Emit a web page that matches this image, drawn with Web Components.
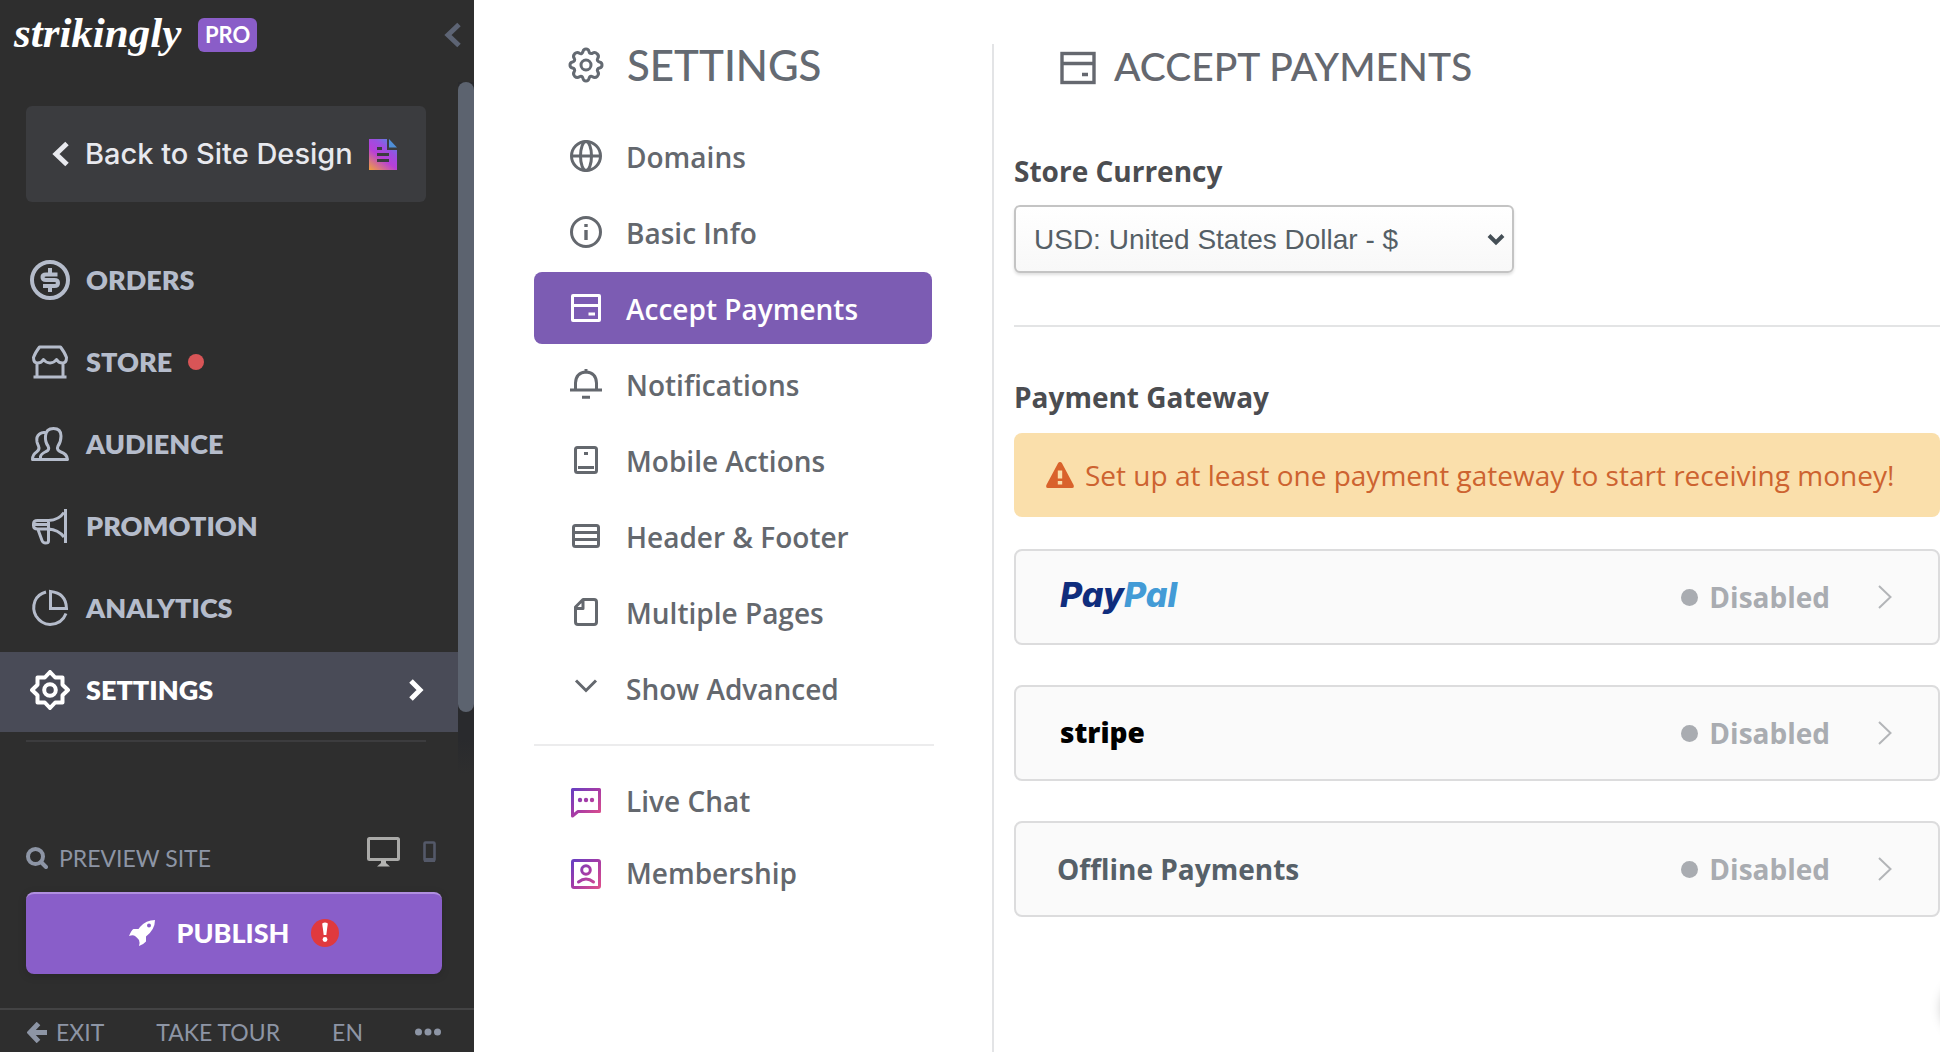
<!DOCTYPE html>
<html lang="en">
<head>
<meta charset="utf-8">
<title>Strikingly – Accept Payments</title>
<style>
  html, body { margin: 0; height: 100%; background: #fff; }
  body { font-family: "Open Sans", sans-serif; overflow: hidden; }
</style>
</head>
<body>
<site-editor></site-editor>

<script>
const define = (name, css, html, setup) => {
  customElements.define(name, class extends HTMLElement {
    connectedCallback() {
      if (this.shadowRoot) return;
      const root = this.attachShadow({ mode: 'open' });
      const t = document.createElement('template');
      t.innerHTML = `<style>*{box-sizing:border-box}${css}</style>` + (typeof html === 'function' ? html(this) : html);
      root.append(t.content.cloneNode(true));
      if (setup) setup(this, root);
    }
  });
};

const stroke = (w, body) => `<g fill="none" stroke="currentColor" stroke-width="${w}">${body}</g>`;
const grad = (id) => `<defs><linearGradient id="${id}" x1="0" y1="0" x2="32" y2="32" gradientUnits="userSpaceOnUse"><stop offset=".1" stop-color="#6b3fc0"/><stop offset=".5" stop-color="#a63ba6"/><stop offset=".95" stop-color="#e0508a"/></linearGradient></defs>`;

const ICONS = {
  'chevron-left': [17, 26, stroke(5, '<path d="M15 2.500 4 13 15 23.500"/>')],
  'chevron-right': [15, 22, stroke(5, '<path d="M2 2 11 11 2 20"/>')],
  'thin-right': [14, 24, stroke(2, '<path d="M1 1 12.500 12 1 23"/>')],
  'select-arrow': [18, 13, stroke(4, '<path d="M2 2.500 9 9.500 16 2.500"/>')],
  'site-doc': [28, 31, `<defs><linearGradient id="d" x1="0" y1="31" x2="24" y2="0" gradientUnits="userSpaceOnUse"><stop offset="0" stop-color="#f2a13c"/><stop offset=".45" stop-color="#b83fd8"/><stop offset=".7" stop-color="#9b4fe0"/><stop offset="1" stop-color="#4f8fe0"/></linearGradient></defs><path fill="url(#d)" d="M0 0H18V11H28V31H0Z"/><path fill="#4f8fd8" d="M20 0 28 8.500H20Z"/><path stroke="#3b3c3f" stroke-width="3" d="M8 9.500H13M8 15.500H20M8 21.500H20"/>`],
  orders: [40, 40, stroke(4, '<circle cx="20" cy="20" r="18"/><path d="M27.500 14.500H16Q12.500 14.500 12.500 17Q12.500 20 16 20H24.500Q28 20 28 23Q28 26 24.500 26H13M20 8V14M20 26V32"/>')],
  store: [40, 40, stroke(3, '<path stroke-linejoin="round" d="M9.500 5H30.500Q35 11 36.500 15.500Q36.500 21 32.500 21Q28.500 21 26.500 17.500Q24 21 20 21Q16 21 13.500 17.500Q11.500 21 7.500 21Q3.500 21 3.500 15.500Q5 11 9.500 5ZM7 21V34M33 21V34M3.500 35H36.500"/>')],
  audience: [40, 40, stroke(3, '<path stroke-linejoin="round" d="M10.500 35.500V32.500Q11 30 16 27.500Q20 26 18 22Q15 18 15.500 12Q16 4.500 23.500 4.500Q31 4.500 31 12Q31 18 28 22Q26 26 31 28Q37 30 37.500 35.500ZM15 8.500Q12 8 9.500 10Q6 12.500 7 18Q7.500 20 8.500 22Q10 25.500 6.500 28Q2.500 30.500 2.500 35.500H10.500M10 28.500"/>')],
  promotion: [40, 40, stroke(3, '<path stroke-linejoin="round" d="M35.500 3V37M34 6.500Q29 14 18.500 14.500H7.500Q3.500 14.500 3.500 18V19.500Q3.500 23 7.500 23H18.500Q28 23.500 34 31M18.500 14.500V35Q18.500 37 15.500 37Q13 37 12 34.500L8 23.500M5 18.500H18"/>')],
  analytics: [40, 40, stroke(3, '<path d="M16 4Q8 6 5 13Q2 21 6 28Q11 36 20 36.500Q32 36 36 25.500M20.500 3.500V20.500H36.500Q36 5 20.500 3.500Z"/>')],
  settings: [40, 40, stroke(4, '<path stroke-linejoin="round" d="M20 2 25.200 7.500H32.500V14.800L38 20 32.500 25.200V32.500H25.200L20 38 14.800 32.500H7.500V25.200L2 20 7.500 14.800V7.500H14.800Z"/><circle cx="20" cy="20" r="5.800"/>')],
  search: [22, 22, stroke(4, '<circle cx="9.500" cy="9.500" r="7.500"/><path stroke-linecap="round" d="M15 15 20 20"/>')],
  monitor: [33, 30, `<rect x="1.500" y="1.500" width="30" height="21" rx="1" fill="none" stroke="#aaaaa8" stroke-width="3"/><path fill="#b4b4b2" d="M14 23H19V26L23 29.500H10L14 26Z"/>`],
  phone: [13, 22, `<rect x="1.500" y="1.500" width="10" height="18" rx="1" fill="none" stroke="#545969" stroke-width="2.600"/><path fill="#545969" d="M1 17H12V21H1Z"/>`],
  rocket: [26, 26, `<path fill="currentColor" fill-rule="evenodd" d="M26 0Q17 0 11 7L9.500 9H4.500Q2.500 10 0 16Q4 14.500 6 16Q8 17.500 10 20Q11 22 10 26Q15 24 17 21.500V16.500Q26 9.500 26 0ZM20 3.500A2 2 0 1 0 20 7.500A2 2 0 1 0 20 3.500Z"/>`],
  alert: [28, 28, `<circle cx="14" cy="14" r="14" fill="#e0393e"/><path fill="#fff" d="M11.200 4.500Q14 2.500 16.800 4.500L15.300 16H12.700Z"/><circle cx="14" cy="20.500" r="2.400" fill="#fff"/>`],
  back: [21, 21, stroke(5, '<path stroke-linejoin="round" d="M3 10.500H20"/><path d="M11.500 1.500 3 10.500 11.500 19.500"/>')],
  dots: [26, 8, `<g fill="currentColor"><circle cx="3.500" cy="4" r="3.500"/><circle cx="13" cy="4" r="3.500"/><circle cx="22.500" cy="4" r="3.500"/></g>`],
  gear: [36, 36, stroke(3, '<path stroke-linejoin="round" d="M18 2Q20.500 2 21 4.500Q21.500 7 24 6.500Q27 4.500 29 6.700Q31.500 9 29.700 11.500Q28.300 14 31.500 15Q34 15.500 34 18Q34 20.500 31.500 21Q28.300 22 29.700 24.500Q31.500 27 29.300 29.300Q27 31.500 24.500 29.700Q22 28.300 21 31.500Q20.500 34 18 34Q15.500 34 15 31.500Q14 28.300 11.500 29.700Q9 31.500 6.700 29.300Q4.500 27 6.300 24.500Q7.700 22 4.500 21Q2 20.500 2 18Q2 15.500 4.500 15Q7.700 14 6.300 11.500Q4.500 9 6.700 6.700Q9 4.500 11.500 6.300Q14 7.700 15 4.500Q15.500 2 18 2Z"/><circle cx="18" cy="18" r="5"/>')],
  globe: [32, 32, stroke(3, '<circle cx="16" cy="16" r="14.500"/><ellipse cx="16" cy="16" rx="5.500" ry="14.500"/><path d="M1.500 16H30.500"/>')],
  info: [32, 32, stroke(3, '<circle cx="16" cy="16" r="14.500"/><path d="M16 14V24M16 8V11" stroke-width="3.400"/>')],
  card: [32, 32, stroke(3, '<rect x="2.500" y="3.500" width="27" height="25" rx=".5"/><path d="M2 13.500H30M18.500 22H25"/>')],
  'card-large': [36, 34, stroke(3.4, '<rect x="2" y="2.500" width="32" height="29"/><path d="M1.500 12.500H34.500M22 23.500H28"/>')],
  bell: [32, 32, stroke(3, '<path d="M0 22H32M5.500 22V15Q6 4.500 16 4Q26 4.500 26.500 15V22M16 1V4M12 29.300H20"/>')],
  mobile: [32, 32, stroke(3, '<rect x="5.500" y="3.500" width="21" height="25" rx="2"/><path d="M8 23.500H24M14 9.500H18"/>')],
  layout: [32, 32, stroke(3, '<rect x="3.500" y="5.500" width="25" height="21" rx="2"/><path d="M4 12.500H28M4 19.500H28"/>')],
  page: [32, 32, stroke(3, '<path stroke-linejoin="round" d="M13 3.500H24Q26.500 3.500 26.500 6V26Q26.500 28.500 24 28.500H8Q5.500 28.500 5.500 26V11ZM13 4V12.500H6"/>')],
  down: [32, 32, stroke(3, '<path d="M6 8.500 16 18.500 26 8.500"/>')],
  chat: [32, 32, grad('c') + `<path fill="none" stroke="url(#c)" stroke-width="3" stroke-linejoin="round" d="M2.500 3.500H29.500V25.500H8L2.500 30Z"/><g fill="url(#c)"><circle cx="10" cy="14" r="2.200"/><circle cx="16" cy="14" r="2.200"/><circle cx="22" cy="14" r="2.200"/></g>`],
  member: [32, 32, grad('m') + `<g fill="none" stroke="url(#m)" stroke-width="3"><rect x="2.500" y="2.500" width="27" height="27" rx="1.500"/><circle cx="16" cy="12" r="4.300"/><path stroke-linecap="round" d="M8.500 24Q16 18 23.500 24"/></g>`],
  warning: [28, 26, `<path fill="currentColor" fill-rule="evenodd" d="M14 0Q15.300 0 16 1.200L27.600 23Q28.500 26 26 26H2Q-.5 26 .4 23L12 1.200Q12.700 0 14 0ZM11.800 8.500V16.500H16.200V8.500ZM11.800 19V22.500H16.200V19Z"/>`]
};

define('ui-icon', ':host{display:inline-flex;flex:none}svg{display:block}', el => {
  const [w, h, body] = ICONS[el.getAttribute('name')];
  return `<svg width="${w}" height="${h}" viewBox="0 0 ${w} ${h}" aria-hidden="true">${body}</svg>`;
});

define('brand-bar', `
  :host{display:flex;align-items:flex-start;height:82px;padding:0 13px 0 14px}
  .logo{font:italic 700 43px/66px "Liberation Serif",serif;color:#fff;text-decoration:none;width:184px}
  .pro{margin-top:18px;padding:0 7px;height:34px;border-radius:6px;background:#8a5dc8;color:#fff;font:700 22px/34px Lato,sans-serif}
  button{all:unset;margin:22px 0 0 auto;color:#5d6474;cursor:pointer}
`, `<a class="logo" href="#">strikingly</a><span class="pro">PRO</span><button aria-label="Collapse sidebar"><ui-icon name="chevron-left"></ui-icon></button>`);

define('back-button', `
  :host{display:block;margin:24px 32px 40px 26px}
  button{all:unset;box-sizing:border-box;display:flex;align-items:center;width:100%;height:96px;padding-left:26px;border-radius:6px;background:#3b3c3f;color:#e8e9ee;font:500 29px/36px Inter,sans-serif;white-space:nowrap;cursor:pointer}
  .label{margin:0 16px}
`, `<button><ui-icon name="chevron-left"></ui-icon><span class="label"><slot></slot></span><ui-icon name="site-doc"></ui-icon></button>`);

define('nav-item', `
  :host{display:block}
  a{display:flex;align-items:center;height:80px;padding:0 34px 4px 30px;color:#b5bccb;text-decoration:none;font:800 27px/36px Lato,sans-serif}
  .label{margin-left:16px}
  .dot{width:16px;height:16px;margin-left:16px;border-radius:50%;background:#d85557}
  .arrow{margin-left:auto}
  :host([active]) a{background:#494b57;color:#fff}
`, el => `<a href="#"><ui-icon name="${el.getAttribute('icon')}"></ui-icon><span class="label"><slot></slot></span>${el.hasAttribute('dot') ? '<span class="dot"></span>' : ''}${el.hasAttribute('active') ? '<ui-icon class="arrow" name="chevron-right"></ui-icon>' : ''}</a>`);

define('publish-panel', `
  :host{display:block;font:400 23px/32px Lato,sans-serif;color:#8d95a5}
  .preview{display:flex;align-items:center;margin:0 38px 14px 26px;height:40px}
  .preview a{display:flex;align-items:center;gap:11px;color:inherit;text-decoration:none}
  .devices{display:flex;align-items:center;gap:23px;margin:0 0 12px auto}
  .devices button{all:unset;display:flex}
  .publish{all:unset;box-sizing:border-box;display:flex;align-items:center;justify-content:center;gap:21px;width:calc(100% - 58px);height:82px;margin:0 32px 34px 26px;padding-bottom:2px;border-top:2px solid #b08fe0;border-radius:8px;background:#895ec9;color:#fff;font:900 27px/36px Lato,sans-serif;cursor:pointer;box-shadow:0 2px 8px rgba(0,0,0,.15)}
  footer{display:flex;align-items:center;justify-content:space-between;height:44px;padding:2px 33px 0 27px;border-top:2px solid #434344}
  footer a,footer button{all:unset;display:flex;align-items:center;gap:8px;cursor:pointer}
`, `
  <div class="preview"><a href="#"><ui-icon name="search"></ui-icon>PREVIEW SITE</a>
    <div class="devices"><button aria-label="Desktop preview"><ui-icon name="monitor"></ui-icon></button><button aria-label="Mobile preview"><ui-icon name="phone"></ui-icon></button></div></div>
  <button class="publish"><ui-icon name="rocket"></ui-icon>PUBLISH<ui-icon name="alert"></ui-icon></button>
  <footer><a href="#"><ui-icon name="back"></ui-icon>EXIT</a><a href="#">TAKE TOUR</a><button>EN</button><button aria-label="More"><ui-icon name="dots"></ui-icon></button></footer>
`);

define('editor-sidebar', `
  :host{display:flex;flex-direction:column;width:474px;flex:none;height:100%;background:#2e2e2e}
  .scroller{display:flex;flex:1;min-height:0;overflow:hidden}
  .items{flex:1}
  nav{display:flex;flex-direction:column;gap:2px}
  hr{margin:8px 32px 0 26px;border:0;height:2px;background:#3c3c3e}
  .track{width:16px;background:linear-gradient(#292a2d 95%,#2e2e2e)}
  .thumb{height:91%;border-radius:8px;background:#5c636f}
  publish-panel{margin-top:64px}
`, `
  <brand-bar></brand-bar>
  <div class="scroller"><div class="items">
    <back-button>Back to Site Design</back-button>
    <nav>
      <nav-item icon="orders">ORDERS</nav-item>
      <nav-item icon="store" dot>STORE</nav-item>
      <nav-item icon="audience">AUDIENCE</nav-item>
      <nav-item icon="promotion">PROMOTION</nav-item>
      <nav-item icon="analytics">ANALYTICS</nav-item>
      <nav-item icon="settings" active>SETTINGS</nav-item>
    </nav><hr></div>
    <div class="track"><div class="thumb"></div></div>
  </div>
  <publish-panel></publish-panel>
`);

define('settings-item', `
  :host{display:block}
  a{display:flex;align-items:center;gap:24px;height:72px;padding:0 36px;border-radius:8px;color:#64686e;text-decoration:none;font:600 28px/40px "Open Sans",sans-serif;white-space:nowrap}
  .label{padding-top:2px}
  :host([tight]) .label{padding:0 0 2px}
  :host([active]) a{background:#7c5cb3;color:#fff}
`, el => `<a href="#"><ui-icon name="${el.getAttribute('icon')}"></ui-icon><span class="label"><slot></slot></span></a>`);

define('settings-menu', `
  :host{display:block;width:518px;flex:none;padding:36px 58px 0 60px}
  h1{display:flex;align-items:center;gap:23px;margin:0 0 26px;padding-left:34px;color:#646a72;font:500 42px/58px Lato,sans-serif}
  nav{display:flex;flex-direction:column;gap:4px;padding-right:2px}
  .extra{gap:0}
  hr{margin:20px 0;border:0;height:2px;background:#ececed}
`, `
  <h1><ui-icon name="gear"></ui-icon>SETTINGS</h1>
  <nav>
    <settings-item icon="globe">Domains</settings-item>
    <settings-item icon="info">Basic Info</settings-item>
    <settings-item icon="card" active>Accept Payments</settings-item>
    <settings-item icon="bell">Notifications</settings-item>
    <settings-item icon="mobile">Mobile Actions</settings-item>
    <settings-item icon="layout">Header &amp; Footer</settings-item>
    <settings-item icon="page">Multiple Pages</settings-item>
    <settings-item icon="down">Show Advanced</settings-item>
  </nav><hr>
  <nav class="extra">
    <settings-item icon="chat" tight>Live Chat</settings-item>
    <settings-item icon="member" tight>Membership</settings-item>
  </nav>
`);

define('currency-field', `
  :host{display:block}
  label{display:block;margin-bottom:14px;color:#4b4d51;font:700 28px/40px "Open Sans",sans-serif}
  .field{display:grid;width:500px;max-width:100%;align-items:center}
  .field>*{grid-area:1/1}
  select{appearance:none;width:100%;height:68px;margin:0;padding:2px 18px 0;border:2px solid #c4c4c4;border-radius:6px;background:linear-gradient(#fff,#f8f8f8);box-shadow:0 2px 3px rgba(0,0,0,.12);color:#555f66;font:400 28px/36px "Liberation Sans",sans-serif}
  ui-icon{justify-self:end;margin-right:9px;color:#454f56;pointer-events:none}
`, `<label for="currency">Store Currency</label><div class="field"><select id="currency"><option>USD: United States Dollar - $</option></select><ui-icon name="select-arrow"></ui-icon></div>`);

define('notice-bar', `
  :host{display:flex;align-items:center;gap:11px;height:84px;padding:0 32px;border-radius:8px;background:#fadfab;color:#cd6330;font:400 28px/40px "Open Sans",sans-serif;white-space:nowrap}
  ui-icon{color:#d9622b}
`, `<ui-icon name="warning"></ui-icon><span><slot></slot></span>`);

define('gateway-card', `
  :host{display:block}
  button{all:unset;box-sizing:border-box;display:flex;align-items:center;width:100%;height:96px;padding:0 46px 0 41px;border:2px solid #dcdcdd;border-radius:8px;background:#fafafa;color:#566068;font:700 28px/40px "Open Sans",sans-serif;cursor:pointer}
  .status{display:flex;align-items:center;gap:11px;margin:0 48px 0 auto;color:#a9acb1}
  .status i{width:17px;height:17px;border-radius:50%;background:#a9acb1}
  ui-icon{color:#b3b5b8}
`, `<button><slot></slot><span class="status"><i></i>Disabled</span><ui-icon name="thin-right"></ui-icon></button>`);

define('paypal-logo', `
  :host{display:block;font:italic 800 34px/40px Inter,sans-serif;color:#0f2d7d;padding:0 0 4px 3px}
  b{font-weight:inherit;color:#439bd6}
`, `Pay<b>Pal</b>`);

define('stripe-logo', `
  :host{display:block;font:800 28px/40px "Open Sans",sans-serif;color:#000;padding:0 0 2px 3px}
`, `stripe`);

define('payments-panel', `
  :host{display:block;flex:1;min-width:0;margin-top:44px;padding-left:20px;border-left:2px solid #e3e4e6}
  h2{display:flex;align-items:center;gap:18px;margin:0 0 63px;padding-left:46px;color:#65686f;font:500 39px/44px Lato,sans-serif;white-space:nowrap}
  h2 ui-icon{padding-top:4px}
  hr{margin:52px 0 50px;border:0;height:2px;background:#e3e4e5}
  h3{margin:0 0 16px;color:#4b4d51;font:700 28px/40px "Open Sans",sans-serif}
  .cards{display:flex;flex-direction:column;gap:40px;margin-top:32px}
`, `
  <h2><ui-icon name="card-large"></ui-icon>ACCEPT PAYMENTS</h2>
  <currency-field></currency-field>
  <hr>
  <h3>Payment Gateway</h3>
  <notice-bar>Set up at least one payment gateway to start receiving money!</notice-bar>
  <div class="cards">
    <gateway-card><paypal-logo></paypal-logo></gateway-card>
    <gateway-card><stripe-logo></stripe-logo></gateway-card>
    <gateway-card>Offline Payments</gateway-card>
  </div>
`);

define('help-bubble', `
  :host{position:fixed;right:-62px;bottom:16px;display:block}
  button{all:unset;display:block;width:60px;height:60px;border-radius:50%;background:#fff;box-shadow:0 2px 12px rgba(0,0,0,.25)}
`, `<button aria-label="Help"></button>`);

define('site-editor', `
  :host{display:flex;height:100vh;overflow:hidden;background:#fff}
`, `<editor-sidebar></editor-sidebar><settings-menu></settings-menu><payments-panel></payments-panel><help-bubble></help-bubble>`);
</script>
</body>
</html>
